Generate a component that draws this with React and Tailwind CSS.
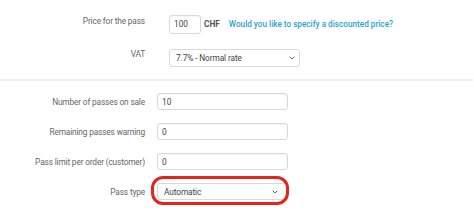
import { ChevronDown } from 'lucide-react';

const font = { fontFamily: 'Roboto, "Liberation Sans", sans-serif' };

function Field({ label, gap, lift = '', children }) {
  return (
    <div className="flex items-center">
      <div className={`w-[145px] shrink-0 ${gap} ${lift} text-right text-[8.3px] tracking-[-0.15px] text-[#666]`}>{label}</div>
      {children}
    </div>
  );
}

function TextInput({ value, w, h = 'h-[17px]' }) {
  return (
    <div className={`${w} ${h} flex items-center rounded-[3px] border border-[#d9d9d9] bg-white px-[4px] text-[8.3px] text-[#444] shadow-[inset_0_1px_1px_rgba(0,0,0,0.04)]`}>
      {value}
    </div>
  );
}

function Select({ value, w, h = 'h-[17px]', pr = 'pr-[3px]' }) {
  return (
    <div className={`${w} ${h} ${pr} flex items-center justify-between rounded-[3px] border border-[#d9d9d9] bg-white pl-[6px] text-[8.3px] tracking-[-0.1px] text-[#444]`}>
      <span>{value}</span>
      <ChevronDown size={8} strokeWidth={3} className="text-[#666]" />
    </div>
  );
}

export default function App() {
  return (
    <div className="h-[213px] w-[474px] overflow-hidden bg-white" style={font}>
      <div className="flex flex-col gap-[14px] pt-[15px]">
        <Field label="Price for the pass" gap="mr-[24px]" lift="mb-[6px]">
          <TextInput value="100" w="w-[32px]" h="h-[19px]" />
          <span className="ml-[3px] text-[8.3px] font-bold text-[#555]">CHF</span>
          <a className="ml-[9px] text-[8.2px] font-medium text-[#2a9fd6]">
            Would you like to specify a discounted price?
          </a>
        </Field>
        <Field label="VAT" gap="mr-[24px]" lift="mb-[7px]">
          <Select value="7.7% - Normal rate" w="w-[131px]" h="h-[18px]" />
        </Field>
      </div>

      <div className="mt-[12px] h-[2px] w-[473px] bg-[#f1f1f1]" />

      <div className="flex flex-col gap-[13px] pt-[12px]">
        <Field label="Number of passes on sale" gap="mr-[12px]">
          <TextInput value="10" w="w-[131px]" />
        </Field>
        <Field label="Remaining passes warning" gap="mr-[12px]">
          <TextInput value="0" w="w-[131px]" />
        </Field>
        <Field label="Pass limit per order (customer)" gap="mr-[12px]">
          <TextInput value="0" w="w-[131px]" />
        </Field>
        <Field label="Pass type" gap="mr-[12px]">
          <div className="relative">
            <Select value="Automatic" w="w-[131px]" pr="pr-[8px]" />
            <div className="pointer-events-none absolute -left-[6px] -right-[1px] -top-[7px] -bottom-[5px] rounded-[12px] border-[3px] border-[#e2261b]" />
          </div>
        </Field>
      </div>
    </div>
  );
}
